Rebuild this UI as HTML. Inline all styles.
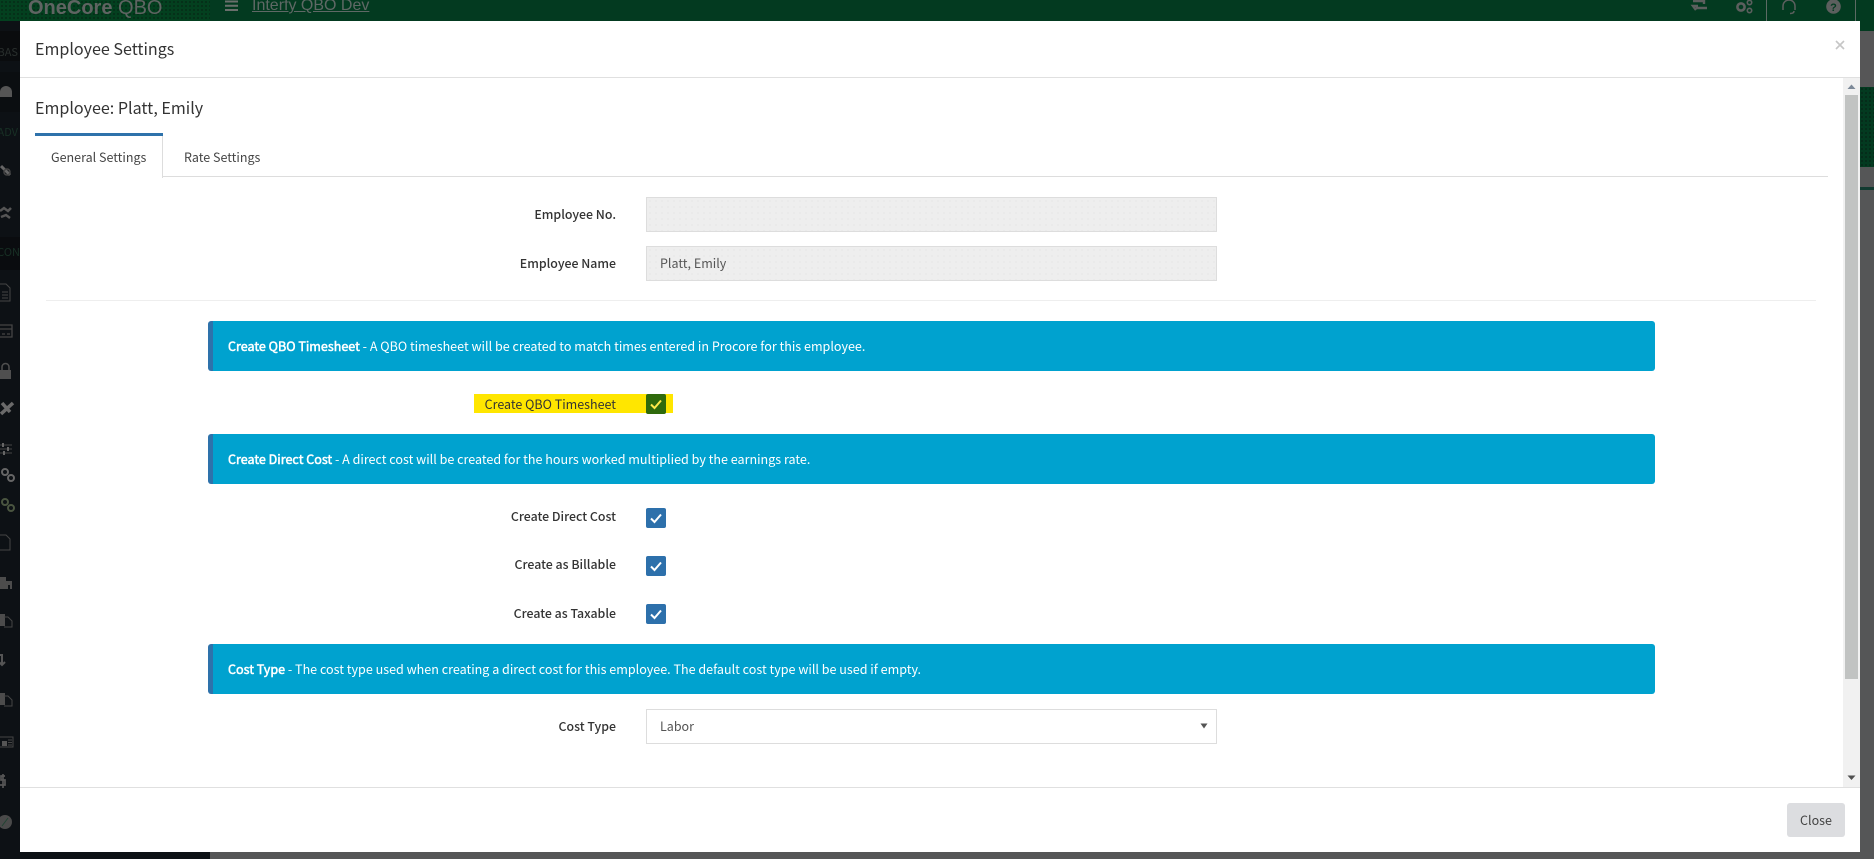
<!DOCTYPE html>
<html lang="en">
<head>
<meta charset="utf-8">
<title>Employee Settings</title>
<style>
html,body{margin:0;padding:0;width:1874px;height:859px;overflow:hidden;background:#555657;}
body{position:relative;font-family:"Noto Sans CJK JP","Liberation Sans",sans-serif;font-size:12.5px;color:#333;}
.a{position:absolute;white-space:nowrap;}
.t{line-height:20px;}
#top{left:0;top:0;width:1874px;height:21px;background:#033a20;overflow:hidden;}
#logo{left:0;top:0;width:210px;height:31px;background:#03401f;background-image:radial-gradient(#0a0c0c 0.7px,transparent 0.8px);background-size:4px 4px;}
#side{left:0;top:21px;width:20px;height:838px;background:#0d1115;overflow:hidden;}
#bot{left:0;top:852px;width:210px;height:7px;background:#0d1115;}
#modal{left:20px;top:21px;width:1840px;height:831px;background:#fff;}
.lab{width:300px;text-align:right;left:316px;font-weight:500;font-size:12.35px;color:#333;}
.inp{left:646px;width:571px;height:35px;box-sizing:border-box;border:1px solid #ddd;background-color:#eee;background-image:radial-gradient(#dcdcdc 0.6px,transparent 0.7px);background-size:6px 6px;color:#555;line-height:32px;padding-left:13px;}
.al{left:208px;width:1447px;height:50px;box-sizing:border-box;background:#00a2cf;border-left:5px solid #2e72ab;border-radius:3px;color:#fff;line-height:49px;padding-left:15px;font-size:12.55px;}
.al b{font-weight:400;-webkit-text-stroke:0.5px #fff;}
.cb{left:646px;width:20px;height:20px;background:#2d70ab;border-radius:2px;}
.cb svg{display:block;}
</style>
</head>
<body>
<div class="a" id="top"></div>
<div class="a" id="logo"></div>
<div class="a" style="left:28px;top:-8px;font:20px/32px 'Liberation Sans',sans-serif;color:#5f6462;"><b>OneCore</b> QBO</div>
<svg class="a" style="left:225px;top:0" width="14" height="12"><path d="M0 1.5h13M0 5.8h13M0 10h13" stroke="#6a6f6c" stroke-width="2"/></svg>
<div class="a" style="left:252px;top:-7px;font:16px/26px 'Liberation Sans',sans-serif;color:#5f6865;text-decoration:underline;">Interfy QBO Dev</div>

<!-- top right icons -->
<svg class="a" style="left:1690px;top:0" width="20" height="12"><path d="M3 1h10M10 0h4v4M17 8H6M8 6H3l3 4" stroke="#5c5f5e" stroke-width="2.4" fill="none"/></svg>
<svg class="a" style="left:1735px;top:0" width="20" height="14"><circle cx="6" cy="7" r="3.6" fill="none" stroke="#5c5f5e" stroke-width="2.6"/><circle cx="14.5" cy="2.5" r="2.2" fill="none" stroke="#5c5f5e" stroke-width="1.6"/><circle cx="14.5" cy="10.5" r="2.2" fill="none" stroke="#5c5f5e" stroke-width="1.6"/></svg>
<div class="a" style="left:1766px;top:0;width:1px;height:21px;background:#5d6a64;"></div>
<svg class="a" style="left:1781px;top:0" width="16" height="15"><path d="M2 10V6a6 6 0 0 1 12 0v4M13 11c0 2-2 2.500-4 2.500" stroke="#5c5f5e" stroke-width="1.500" fill="none"/></svg>
<svg class="a" style="left:1826px;top:0" width="16" height="15"><circle cx="7.500" cy="6.500" r="7.300" fill="#5c5f5e"/><text x="7.500" y="11" font-family="Liberation Sans" font-size="11" font-weight="700" text-anchor="middle" fill="#033a20">?</text></svg>
<div class="a" style="left:1855px;top:0;width:1px;height:21px;background:#5d6a64;"></div>

<!-- sidebar -->
<div class="a" id="side">
  <div class="a" style="left:0;top:10px;width:20px;height:30px;background:#0a0c0e;"></div>
  <div class="a" style="left:0;top:51px;width:20px;height:40px;background:#0b0e11;"></div>
  <div class="a" style="left:0;top:216px;width:20px;height:33px;background:#0a0c0f;"></div>
  <div class="a" style="right:2px;top:23px;font-size:11px;line-height:16px;color:#2a302e;">BAS</div>
  <div class="a" style="right:2px;top:103px;font-size:11px;line-height:16px;color:#183025;">ADV</div>
  <div class="a" style="right:0;top:223px;font-size:11px;line-height:16px;color:#183025;">CON</div>
  <svg class="a" style="left:0;top:0" width="20" height="838" fill="none" stroke="#454545" stroke-width="1.500">
    <!-- gauge -->
    <path d="M0 71a6 6 0 0 1 12 0v5H0z" fill="#555" stroke="none"/>
    <!-- chain -->
    <path d="M1 145l4 4M5 149l5 5" stroke="#666" stroke-width="3"/>
    <circle cx="7" cy="151" r="3"/>
    <!-- tools -->
    <path d="M0 190l4-3 4 3 3-3M1 196l5-2 4 3" stroke="#555" stroke-width="2.500"/>
    <!-- document -->
    <path d="M0 263h6l4 4v13H0M2 271h6M2 274h6M2 277h6" stroke-width="1"/>
    <!-- card -->
    <path d="M0 304h12v12H0M0 308h12M2 313h3M7 313h3" stroke-width="1.300"/>
    <!-- lock -->
    <rect x="0" y="349" width="11" height="9" fill="#4f4f4f" stroke="none"/>
    <path d="M2 349v-3a3.500 3.500 0 0 1 7 0v3" stroke="#4f4f4f"/>
    <!-- tools -->
    <path d="M1 393l12-11M2 382l8 9" stroke="#6a6a6a" stroke-width="3.500"/>
    <!-- sliders -->
    <path d="M0 424h12M0 428h12M0 432h12" stroke-width="1"/>
    <path d="M3 422v4M8 426v4M4 430v4" stroke="#666" stroke-width="2"/>
    <!-- chains -->
    <circle cx="5" cy="451" r="3" stroke="#666" stroke-width="2"/><circle cx="11" cy="457" r="3" stroke="#666" stroke-width="2"/>
    <circle cx="5" cy="481" r="3" stroke="#4a5540" stroke-width="2"/><circle cx="11" cy="487" r="3" stroke="#4a5540" stroke-width="2"/>
    <!-- file -->
    <path d="M0 514h6l4 4v11H0" stroke-width="1"/>
    <!-- building -->
    <rect x="0" y="556" width="6" height="12" fill="#4c4c4c" stroke="none"/><path d="M6 560h6v8h-2v-4H8v4H6z" fill="#4c4c4c" stroke="none"/>
    <!-- files -->
    <path d="M0 593h5v12H0" fill="#4c4c4c" stroke="none"/><path d="M4 596h4l4 4v6H4" stroke-width="1"/>
    <!-- arrow -->
    <path d="M0 634h2v9M-1 641l3 3 3-3" stroke="#555" stroke-width="2"/>
    <!-- files -->
    <path d="M0 672h5v12H0" fill="#4c4c4c" stroke="none"/><path d="M4 675h4l4 4v6H4" stroke-width="1"/>
    <!-- id card -->
    <path d="M0 716h13v10H0M8 719h4M8 721.500h4M8 724h4" stroke-width="1"/><rect x="2" y="720" width="5" height="5" fill="#555" stroke="none"/>
    <!-- dollar -->
    <path d="M5 755H1v4h4v5H0M3 753v14" stroke="#555" stroke-width="1.700"/>
    <!-- percent -->
    <circle cx="5" cy="801" r="7" fill="#4a4a4a" stroke="none"/>
    <path d="M2 805l6-8" stroke="#243" stroke-width="1"/>
    <path d="M0 834h7" stroke-width="1"/>
  </svg>
</div>
<div class="a" id="bot"></div>

<!-- right strip -->
<div class="a" style="left:1860px;top:21px;width:14px;height:10px;background:#033a20;"></div>
<div class="a" style="left:1860px;top:31px;width:14px;height:56px;background:#565657;"></div>
<div class="a" style="left:1860px;top:87px;width:14px;height:80px;background:#033a20;background-image:radial-gradient(#0a0c0c 0.7px,transparent 0.8px);background-size:4px 4px;"></div>
<div class="a" style="left:1860px;top:187px;width:14px;height:3px;background:#113a30;"></div>

<!-- modal -->
<div class="a" id="modal"></div>
<div class="a t" style="left:35px;top:35px;font-size:16.1px;line-height:26px;color:#333;">Employee Settings</div>
<svg class="a" style="left:1835px;top:40px" width="10" height="10"><path d="M1 1l8 8M9 1l-8 8" stroke="#c6c6c6" stroke-width="1.600"/></svg>
<div class="a" style="left:20px;top:77px;width:1840px;height:1px;background:#e0e0e0;"></div>

<div class="a" style="left:35px;top:94px;font-size:16.1px;line-height:26px;color:#333;">Employee: Platt, Emily</div>

<div class="a" style="left:35px;top:133px;width:128px;height:3px;background:#2e72ab;"></div>
<div class="a" style="left:162px;top:136px;width:1px;height:42px;background:#ddd;"></div>
<div class="a" style="left:163px;top:176px;width:1665px;height:1px;background:#ddd;"></div>
<div class="a t" style="left:51px;top:147px;color:#444;">General Settings</div>
<div class="a t" style="left:184px;top:147px;color:#444;">Rate Settings</div>

<div class="a t lab" style="top:204px;">Employee No.</div>
<div class="a inp" style="top:197px;"></div>
<div class="a t lab" style="top:253px;">Employee Name</div>
<div class="a inp" style="top:246px;">Platt, Emily</div>
<div class="a" style="left:46px;top:300px;width:1770px;height:1px;background:#eee;"></div>

<div class="a al" style="top:321px;"><b>Create QBO Timesheet</b> - A QBO timesheet will be created to match times entered in Procore for this employee.</div>

<div class="a" style="left:474px;top:394px;width:199px;height:19px;background:#ffe600;"></div>
<div class="a" style="left:670px;top:394px;width:3px;height:13px;background:#ffe600;"></div>
<div class="a t lab" style="top:394px;font-weight:400;font-size:12.5px;color:#333;">Create QBO Timesheet</div>
<div class="a cb" style="top:394px;background:#2f6a0c;"><svg width="20" height="20"><path d="M5 10.500l3.500 3.500 6.500-7.500" stroke="#ffe94a" stroke-width="2" fill="none"/></svg></div>

<div class="a al" style="top:434px;"><b>Create Direct Cost</b> - A direct cost will be created for the hours worked multiplied by the earnings rate.</div>

<div class="a t lab" style="top:506px;">Create Direct Cost</div>
<div class="a cb" style="top:508px;"><svg width="20" height="20"><path d="M5 10.500l3.500 3.500 6.500-7.500" stroke="#fff" stroke-width="2" fill="none"/></svg></div>
<div class="a t lab" style="top:554px;">Create as Billable</div>
<div class="a cb" style="top:556px;"><svg width="20" height="20"><path d="M5 10.500l3.500 3.500 6.500-7.500" stroke="#fff" stroke-width="2" fill="none"/></svg></div>
<div class="a t lab" style="top:603px;">Create as Taxable</div>
<div class="a cb" style="top:604px;"><svg width="20" height="20"><path d="M5 10.500l3.500 3.500 6.500-7.500" stroke="#fff" stroke-width="2" fill="none"/></svg></div>

<div class="a al" style="top:644px;"><b>Cost Type</b> - The cost type used when creating a direct cost for this employee. The default cost type will be used if empty.</div>

<div class="a t lab" style="top:716px;">Cost Type</div>
<div class="a inp" style="top:709px;background:#fff;">Labor</div>
<svg class="a" style="left:1200px;top:723px" width="8" height="6"><path d="M0.500 0.500h7l-3.500 5z" fill="#555"/></svg>

<!-- scrollbar -->
<div class="a" style="left:1843px;top:78px;width:17px;height:709px;background:#f1f1f1;"></div>
<div class="a" style="left:1845px;top:95px;width:13px;height:584px;background:#c1c3c2;"></div>
<svg class="a" style="left:1847px;top:84px" width="9" height="6"><path d="M4.500 0.500l4 4.500h-8z" fill="#7d8a99"/></svg>
<svg class="a" style="left:1847px;top:775px" width="9" height="6"><path d="M0.500 0.500h8l-4 4.500z" fill="#505050"/></svg>

<!-- footer -->
<div class="a" style="left:20px;top:787px;width:1840px;height:1px;background:#e0e0e0;"></div>
<div class="a" style="left:1787px;top:803px;width:58px;height:34px;background:#dcdde0;border-radius:3px;text-align:center;line-height:33px;color:#444;">Close</div>
</body>
</html>
